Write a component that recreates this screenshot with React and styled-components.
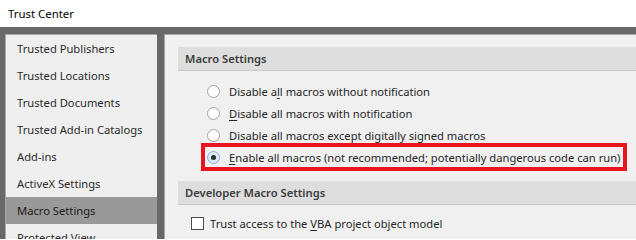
import styled, { createGlobalStyle } from "styled-components";

const GlobalStyle = createGlobalStyle`
  html, body {
    margin: 0;
    padding: 0;
    height: 239px;
    overflow: hidden;
    background: #ffffff;
    font-family: "Noto Sans", "Open Sans", sans-serif;
    font-size: 11.2px;
    color: #262626;
  }
`;

const Window = styled.div`
  display: flex;
  flex-direction: column;
  height: 239px;
`;

const TitleBar = styled.div`
  height: 27px;
  display: flex;
  align-items: center;
  padding-left: 8px;
  color: #000;
  font-size: 11.4px;
  background: #ffffff;
`;

const Frame = styled.div`
  flex: 1;
  display: grid;
  grid-template-columns: 152px 1fr;
  gap: 7px;
  padding: 7px 0 0 5px;
  background: #686868;
  min-height: 0;
`;

const Sidebar = styled.div`
  background: #efefef;
  border-left: 1px solid #a6a6a6;
  border-top: 1px solid #a6a6a6;
  display: flex;
  flex-direction: column;
  overflow: hidden;
`;

const NavItem = styled.div`
  height: 27px;
  flex-shrink: 0;
  display: flex;
  align-items: center;
  padding-left: 11px;
  background: ${(p) => (p.active ? "#999999" : "transparent")};
  color: ${(p) => (p.active ? "#1a1a1a" : "#2b2b2b")};
`;

const Main = styled.div`
  background: #f0f0f0;
  border-left: 1px solid #a6a6a6;
  border-top: 1px solid #a6a6a6;
  padding: 12px 0 0 13px;
  overflow: hidden;
`;

const SectionHeader = styled.div`
  height: 23px;
  display: flex;
  align-items: center;
  padding-left: 7px;
  background: #dedede;
  border-bottom: 1px solid #c9c9c9;
  font-weight: 600;
  color: #3b3b3b;
`;

const OptionList = styled.div`
  display: flex;
  flex-direction: column;
  align-items: flex-start;
  padding: 9px 0 0 26px;
  margin-bottom: 13px;
`;

const OptionRow = styled.label`
  height: 22px;
  display: flex;
  align-items: center;
  gap: 9px;
  padding: 0 4px 0 3px;
  white-space: nowrap;
  outline: ${(p) => (p.highlight ? "4px solid #e8141f" : "none")};
  outline-offset: -1px;
`;

const Radio = styled.span`
  width: 13px;
  height: 13px;
  box-sizing: border-box;
  border-radius: 50%;
  border: 1px solid ${(p) => (p.checked ? "#8fb0dc" : "#a3a3a3")};
  background: ${(p) => (p.checked ? "#dde8f6" : "#ffffff")};
  display: flex;
  align-items: center;
  justify-content: center;
  flex-shrink: 0;
  &::after {
    content: "";
    width: 5px;
    height: 5px;
    border-radius: 50%;
    background: #2e2e2e;
    display: ${(p) => (p.checked ? "block" : "none")};
  }
`;

const CheckRow = styled.label`
  height: 22px;
  display: flex;
  align-items: center;
  gap: 6px;
  padding: 7px 0 0 13px;
  white-space: nowrap;
`;

const Checkbox = styled.span`
  width: 13px;
  height: 13px;
  box-sizing: border-box;
  border: 1px solid #4d4d4d;
  background: #ffffff;
  flex-shrink: 0;
`;

const Key = styled.span`
  text-decoration: underline;
  text-underline-offset: 2px;
`;

const navItems = [
  "Trusted Publishers",
  "Trusted Locations",
  "Trusted Documents",
  "Trusted Add-in Catalogs",
  "Add-ins",
  "ActiveX Settings",
  "Macro Settings",
  "Protected View",
];

export default function App() {
  return (
    <Window>
      <GlobalStyle />
      <TitleBar>Trust Center</TitleBar>
      <Frame>
        <Sidebar>
          {navItems.map((item) => (
            <NavItem key={item} active={item === "Macro Settings"}>
              {item}
            </NavItem>
          ))}
        </Sidebar>
        <Main>
          <SectionHeader>Macro Settings</SectionHeader>
          <OptionList>
            <OptionRow>
              <Radio />
              <span>
                Disable a<Key>l</Key>l macros without notification
              </span>
            </OptionRow>
            <OptionRow>
              <Radio />
              <span>
                <Key>D</Key>isable all macros with notification
              </span>
            </OptionRow>
            <OptionRow>
              <Radio />
              <span>
                Disable all macros except di<Key>g</Key>itally signed macros
              </span>
            </OptionRow>
            <OptionRow highlight>
              <Radio checked />
              <span>
                <Key>E</Key>nable all macros (not recommended; potentially
                dangerous code can run)
              </span>
            </OptionRow>
          </OptionList>
          <SectionHeader>Developer Macro Settings</SectionHeader>
          <CheckRow>
            <Checkbox />
            <span>
              Trust access to the <Key>V</Key>BA project object model
            </span>
          </CheckRow>
        </Main>
      </Frame>
    </Window>
  );
}
